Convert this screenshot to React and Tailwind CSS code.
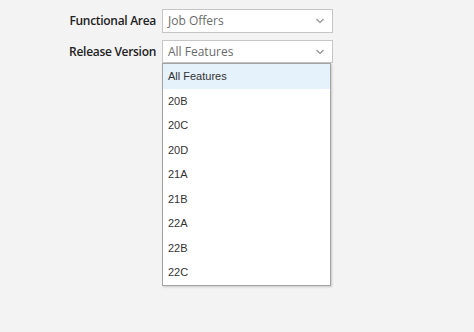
import React from "react";

const Chevron = () => (
  <svg width="10" height="6" viewBox="0 0 10 6" fill="none" className="shrink-0">
    <path d="M1.5 1 L5 4.5 L8.5 1" stroke="#8f8f8f" strokeWidth="1.1" />
  </svg>
);

const items = ["All Features", "20B", "20C", "20D", "21A", "21B", "22A", "22B", "22C"];

export default function App() {
  return (
    <div className="w-[474px] h-[332px] bg-[#f3f3f3] overflow-hidden" style={{ fontFamily: '"Open Sans", "Noto Sans", sans-serif' }}>
      <div className="grid grid-cols-[156px_171px] gap-x-[6px] gap-y-[7px] pt-[9px]">
        <div className="h-[24px] flex items-center justify-end text-[12px] font-semibold tracking-[-0.3px] text-[#222]">Functional Area</div>
        <div className="h-[24px] border border-[#c6c6c6] bg-white flex items-center justify-between pl-[5px] pr-[7px] text-[12px] text-[#6b6b6b]">
          <span>Job Offers</span>
          <Chevron />
        </div>
        <div className="h-[23px] flex items-center justify-end text-[12px] font-semibold tracking-[-0.3px] text-[#222]">Release Version</div>
        <div className="relative h-[23px] border border-[#c6c6c6] bg-white flex items-center justify-between pl-[5px] pr-[7px] text-[12px] text-[#6b6b6b]">
          <span>All Features</span>
          <Chevron />
          <div className="absolute left-[-1px] top-[22px] w-[169px] border border-[#a3a3a3] bg-white shadow-[1px_1px_2px_rgba(0,0,0,0.18)] z-10" style={{ fontFamily: '"Liberation Sans", Arial, sans-serif' }}>
            {items.map((it, i) => (
              <div key={it} className={`h-[24.5px] flex items-center pl-[5px] text-[11px] text-[#333] ${i === 0 ? "bg-[#e5f1fb]" : ""}`}>
                {it}
              </div>
            ))}
          </div>
        </div>
      </div>
    </div>
  );
}
